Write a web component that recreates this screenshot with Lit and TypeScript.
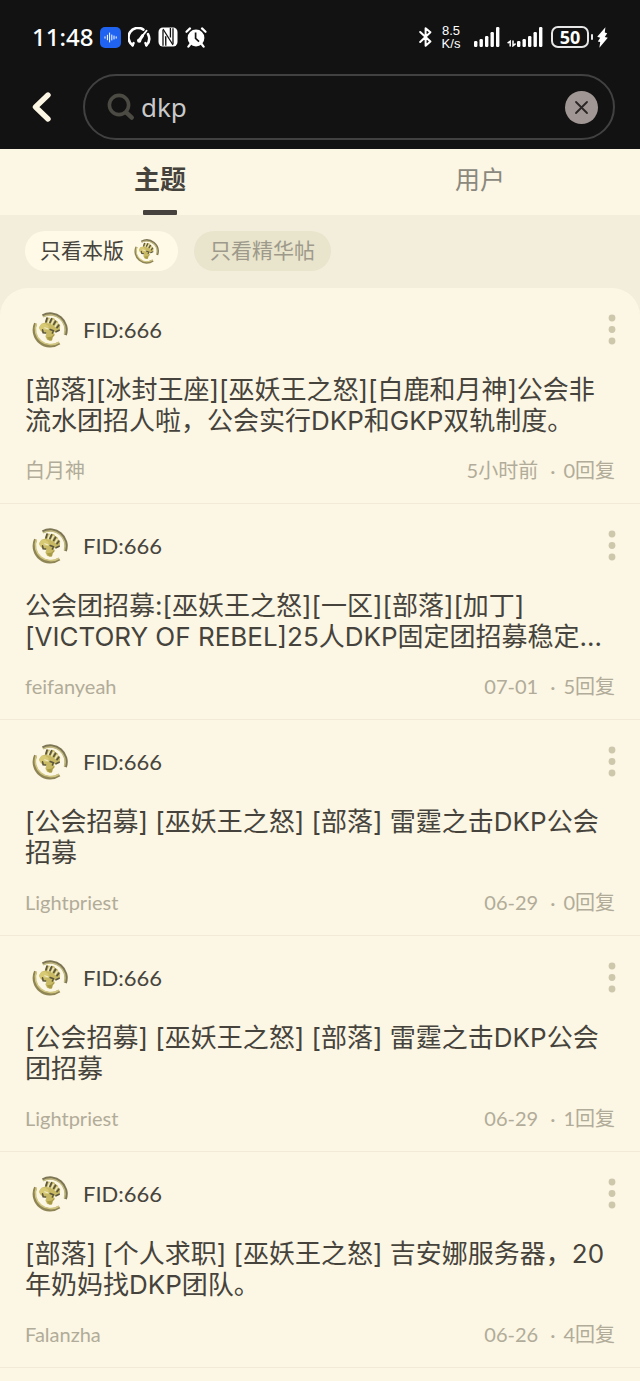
import { LitElement, html, svg, css } from "lit";
import { customElement, property, state } from "lit/decorators.js";

interface Topic {
  title: string;
  author: string;
  time: string;
  replies: number;
}

const TOPICS: Topic[] = [
  { title: "[部落][冰封王座][巫妖王之怒][白鹿和月神]公会非流水团招人啦，公会实行DKP和GKP双轨制度。", author: "白月神", time: "5小时前", replies: 0 },
  { title: "公会团招募:[巫妖王之怒][一区][部落][加丁][VICTORY OF REBEL]25人DKP固定团招募稳定…", author: "feifanyeah", time: "07-01", replies: 5 },
  { title: "[公会招募] [巫妖王之怒] [部落] 雷霆之击DKP公会招募", author: "Lightpriest", time: "06-29", replies: 0 },
  { title: "[公会招募] [巫妖王之怒] [部落] 雷霆之击DKP公会团招募", author: "Lightpriest", time: "06-29", replies: 1 },
  { title: "[部落] [个人求职] [巫妖王之怒] 吉安娜服务器，20年奶妈找DKP团队。", author: "Falanzha", time: "06-26", replies: 4 },
];

/* Golden fist inside a broken ring, the forum's emblem. */
@customElement("forum-emblem")
export class ForumEmblem extends LitElement {
  static styles = css`
    :host { display: block; width: 36px; height: 36px; }
    svg { display: block; width: 100%; height: 100%; }
  `;
  render() {
    return html`<svg viewBox="0 0 36 36" aria-hidden="true">
      <g fill="none">
        <path d="M10.6 3.8A16 16 0 0 1 33.4 23" stroke="#7d7655" stroke-width="3"/>
        <path d="M11 4.8A15 15 0 0 1 32.4 22.6" stroke="#c4bb80" stroke-width="1.5"/>
        <path d="M3.6 11.4A16 16 0 0 0 27.4 31" stroke="#8e8455" stroke-width="3.2"/>
        <path d="M4.4 11.6A15.4 15.4 0 0 0 27 30.2" stroke="#d0c680" stroke-width="1.6"/>
      </g>
      <path d="M7 15.4l2.4-3.6 3.4-1 1.8-5 2.6-.2 1.6 1.6 1.8-1.4 2 1 .8 2 2.2.4.8 2.4 1.8 1.8-.4 4-3.2 2.2-2.6.6.4 2.4-2.6 2.4-.6 3.8-4-.8-1.8-3.6 1-3-3.8-.6-2.2-2.2z" fill="#c8ba64"/>
      <path d="M7 15.4l2.4-3.4 3.8-.4 3.6 3-1 3.2-5 .6-3-1z" fill="#d8ca74"/>
      <path d="M14.6 25.4l5.2-1 2-2.2 1.2.6-2.2 2.4-.8 3.4-2.8-.2z" fill="#a99a45"/>
      <g stroke="#5c563e" stroke-width="1.8" stroke-linecap="round" fill="none">
        <path d="M14 9.8l1-3.6M18 10.4l1.6-3.6M21.8 12.4l1.8-3.2M25 15.6l1.8-2.4"/>
        <path d="M10.6 17.8l.6 3 2.4.2M18.2 17.6l3.2 1.2-1 2.2M24 19.8l3.2-1.6" stroke-width="1.6"/>
      </g>
      <g stroke="#f1ecca" stroke-width="1.2" stroke-linecap="round" fill="none">
        <path d="M16 11l1.4-4M19.6 12l1.8-3.8M23.2 14.4l2-3.2M12.8 15.8l3.4 1.2"/>
      </g>
    </svg>`;
  }
}

@customElement("phone-status")
export class PhoneStatus extends LitElement {
  static styles = css`
    :host { display: flex; align-items: center; justify-content: space-between; height: 74px; padding: 0 32px; color: #fff; font-family: "Noto Sans", sans-serif; }
    svg { display: block; }
    .side { display: flex; align-items: center; }
    .left { gap: 7px; }
    .clock { font-size: 24px; line-height: 30px; font-weight: 500; }
    .rate { display: flex; flex-direction: column; width: 22px; font-family: "Liberation Sans", sans-serif; font-size: 13px; line-height: 13px; text-align: center; margin: 0 12px 0 8px; }
    .battery { display: flex; align-items: center; margin-left: 8px; }
    .level { box-sizing: border-box; width: 38px; height: 22px; border: 2px solid #e6e6e6; border-radius: 7px; font-size: 18px; line-height: 18px; font-weight: 700; text-align: center; }
    .nub { width: 2px; height: 6px; margin-left: 2px; border-radius: 1px; background: #e6e6e6; }
    .bolt { margin-left: 4px; }
    .second { margin-left: 7px; }
  `;
  render() {
    return html`
      <div class="side left">
        <span class="clock">11:48</span>
        <svg width="21" height="21" viewBox="0 0 21 21"><rect width="21" height="21" rx="5" fill="#1f63f0"/><path d="M5 9.8v1.4M7.4 8.2v4.6M9.6 6v9M11.8 8v5M14 9v3M16.2 9.8v1.4" stroke="#fff" stroke-width="1" stroke-linecap="round"/></svg>
        <svg width="23" height="21" viewBox="0 0 23 21" fill="none" stroke="#fff" stroke-linecap="round"><path d="M4.6 18.2A9.4 9.4 0 0 1 15.4 2.6M20 7.2a9.4 9.4 0 0 1-1.6 11" stroke-width="2.6"/><path d="M4.6 18.4L5.6 16M18.4 18.4l-1-2.4" stroke-width="2.4"/><path d="M18.6 3.6L11 13" stroke-width="1.8"/><path d="M14.6 8.6L11.4 13.4" stroke-width="3"/><circle cx="11.2" cy="13.6" r="1.4" fill="#fff" stroke-width="1.6"/></svg>
        <svg width="20" height="20" viewBox="0 0 20 20"><rect x=".5" y=".5" width="19" height="19" rx="4.5" fill="#fff"/><path d="M5 3v15.8M15 1.2V17" stroke="#121212" stroke-width="1.3"/><path d="M5 2l10 16M7.8 9.6v9.2l-.2-9.6M12.4 1v9.4" fill="none" stroke="#121212" stroke-width="1.3"/></svg>
        <svg width="22" height="21" viewBox="0 0 22 21"><circle cx="11" cy="11" r="8.4" fill="#fff"/><path d="M1.5 4.8L5 1.4M20.5 4.8L17 1.4M5.4 17l-2 2.6M16.6 17l2 2.6" stroke="#fff" stroke-width="2.2" stroke-linecap="round"/><path d="M10.6 5.6v5.8l3.4 3.2" fill="none" stroke="#121212" stroke-width="1.7"/></svg>
      </div>
      <div class="side">
        <svg width="13" height="22" viewBox="0 0 13 22" fill="none" stroke="#fff" stroke-width="2" stroke-linejoin="round" stroke-linecap="round"><path d="M1.2 6l10.2 9.6-4.8 4.2V2.2l4.8 4L1.2 16"/></svg>
        <div class="rate"><span>8.5</span><span>K/s</span></div>
        ${this.bars()}
        <svg class="second" width="10" height="20" viewBox="0 0 10 20" fill="none" stroke="#fff" stroke-width="1.5"><path d="M.6 16.2l2.6-2V19.6M6 13.6v5.2l2.6-2.2"/></svg>
        ${this.bars()}
        <div class="battery"><div class="level">50</div><div class="nub"></div>
          <svg class="bolt" width="11" height="21" viewBox="0 0 11 21"><path d="M8.4.3L.2 9.8l3 .9L.8 14.4l2.4.5-.8 5.8L10.8 10.8l-3-.8 2.4-3.8-2.4-.6z" fill="#fff"/></svg>
        </div>
      </div>`;
  }
  private bars() {
    return html`<svg width="26" height="20" viewBox="0 0 26 20" fill="#fff">
      ${[6, 8, 11, 15, 20].map((h, i) => svg`<rect x=${i * 5.5} y=${20 - h} width="3.4" height=${h} rx="1.2"/>`)}
    </svg>`;
  }
}

@customElement("topic-row")
export class TopicRow extends LitElement {
  @property({ attribute: false }) topic!: Topic;
  static styles = css`
    :host { display: block; padding: 24px 25px 20px; border-bottom: 1px solid #f2ead6; }
    .head { display: flex; align-items: center; height: 36px; }
    forum-emblem { margin: 0 15px 0 7px; }
    .forum { flex: 1; font-family: "Lato", "Noto Sans CJK SC", sans-serif; font-size: 22px; line-height: 30px; color: #47453e; }
    .more { display: flex; width: 20px; height: 36px; margin-right: -7px; padding: 0; border: 0; background: none; justify-content: center; }
    .title { margin: 26px 0 22px; font-size: 26px; line-height: 31px; font-weight: 400; color: #45433c; display: -webkit-box; -webkit-box-orient: vertical; -webkit-line-clamp: 2; overflow: hidden; }
    .meta { display: flex; justify-content: space-between; font-family: "Lato", "Noto Sans CJK SC", sans-serif; font-size: 20px; line-height: 25px; color: #b1ac99; }
    .info { display: flex; gap: 8px; }
    .time { margin-right: 4px; }
  `;
  render() {
    const t = this.topic;
    return html`
      <div class="head">
        <forum-emblem></forum-emblem>
        <span class="forum">FID:666</span>
        <button class="more" aria-label="更多"><svg width="8" height="36" viewBox="0 0 8 36" fill="#cdc7ac"><circle cx="4" cy="6" r="3.4"/><circle cx="4" cy="17.5" r="3.4"/><circle cx="4" cy="29" r="3.4"/></svg></button>
      </div>
      <h2 class="title">${t.title}</h2>
      <div class="meta"><span>${t.author}</span><span class="info"><span class="time">${t.time}</span><span>·</span><span>${t.replies}回复</span></span></div>`;
  }
}

@customElement("app-root")
export class AppRoot extends LitElement {
  @state() private query = "dkp";
  static styles = css`
    :host { display: block; min-height: 100vh; background: #fcf6e4; font-family: "Inter", "Noto Sans CJK SC", sans-serif; color: #45433c; }
    * { box-sizing: border-box; }
    button { font: inherit; border: 0; padding: 0; background: none; color: inherit; }
    svg { display: block; }
    .top { background: #121212; padding-bottom: 9px; }
    .bar { display: flex; align-items: center; padding: 0 25px 0 31px; }
    .back { width: 52px; }
    .search { flex: 1; display: flex; align-items: center; height: 66px; padding: 0 15px 0 22px; border: 2px solid #414141; border-radius: 33px; }
    .field { flex: 1; min-width: 0; margin: 0 0 0 6px; padding: 0; border: 0; outline: 0; background: none; color: #c9c9c9; font-family: "Noto Sans", "Noto Sans CJK SC", sans-serif; font-size: 26px; line-height: 36px; }
    .clear { width: 33px; height: 33px; border-radius: 50%; background: #a09693; }
    .tabs { display: grid; grid-template-columns: 1fr 1fr; height: 66px; }
    .tab { display: flex; flex-direction: column; align-items: center; justify-content: space-between; padding-top: 13px; font-size: 25px; line-height: 36px; color: #8b887e; }
    .tab.on { font-size: 26px; font-weight: 700; color: #45433c; }
    .mark { width: 34px; height: 5px; border-radius: 1px; background: #45413f; }
    .filters { display: flex; gap: 16px; padding: 16px 25px 17px; background: #f3eedb; }
    .under { background: #f3eedb; }
    .chip { display: flex; align-items: center; gap: 10px; height: 40px; padding: 0 16px; border-radius: 20px; font-size: 21px; line-height: 28px; background: #e9e4cc; color: #9d9a8b; }
    .chip.on { background: #fffae8; color: #45433c; padding: 0 19px 0 15px; }
    .chip forum-emblem { width: 25px; height: 25px; }
    .list { background: #fcf6e4; border-radius: 28px 28px 0 0; }
  `;
  render() {
    return html`
      <header class="top">
        <phone-status></phone-status>
        <div class="bar">
          <button class="back" aria-label="返回"><svg width="20" height="32" viewBox="0 0 20 32"><path d="M17 4L4.5 16 17 28" fill="none" stroke="#fcf6e4" stroke-width="5.4" stroke-linecap="round" stroke-linejoin="round"/></svg></button>
          <div class="search">
            <svg width="28" height="28" viewBox="0 0 28 28" fill="none" stroke="#4b4a43" stroke-linecap="round"><circle cx="12" cy="12" r="9.6" stroke-width="3.6"/><path d="M19.4 19.6l5.4 5" stroke-width="4.4"/></svg>
            <input class="field" aria-label="搜索" .value=${this.query} @input=${(e: Event) => (this.query = (e.target as HTMLInputElement).value)} />
            <button class="clear" aria-label="清除" @click=${() => (this.query = "")}><svg width="33" height="33" viewBox="0 0 33 33"><path d="M11 11l11 11M22 11L11 22" stroke="#292625" stroke-width="1.8" stroke-linecap="round"/></svg></button>
          </div>
        </div>
      </header>
      <nav class="tabs">
        <button class="tab on">主题<span class="mark"></span></button>
        <button class="tab">用户</button>
      </nav>
      <div class="filters">
        <button class="chip on"><span>只看本版</span><forum-emblem></forum-emblem></button>
        <button class="chip"><span>只看精华帖</span></button>
      </div>
      <div class="under"><main class="list">${TOPICS.map((t) => html`<topic-row .topic=${t}></topic-row>`)}</main></div>`;
  }
}
